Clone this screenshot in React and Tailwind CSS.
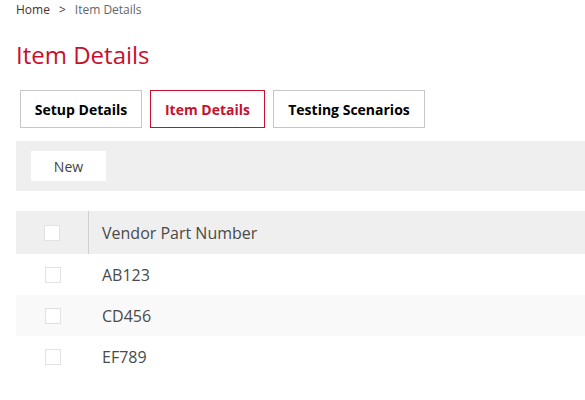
import React from "react";

const rows = ["AB123", "CD456", "EF789"];

const Box = () => (
  <span className="block w-4 h-4 bg-white border border-[#e2e2e2]" />
);

const App = () => {
  return (
    <div className="min-h-[400px] bg-white pl-4 font-['Open_Sans',sans-serif]">
      {/* Breadcrumb */}
      <div className="pt-[1px] text-[12px] leading-[17px] flex gap-[9px]">
        <span className="text-[#4a2f2f]">Home</span>
        <span className="text-[#4a2f2f]">&gt;</span>
        <span className="text-[#666]">Item Details</span>
      </div>

      <h1 className="mt-[21px] text-[24px] leading-[32px] text-[#c8102e]">
        Item Details
      </h1>

      {/* Tabs */}
      <div className="mt-[19px] ml-1 flex gap-2">
        <button className="h-[38px] w-[122px] border border-[#c6c6c6] bg-white text-[14px] font-bold text-black">
          Setup Details
        </button>
        <button className="h-[38px] w-[115px] border border-[#c8102e] bg-white text-[14px] font-bold text-[#c8102e]">
          Item Details
        </button>
        <button className="h-[38px] w-[152px] border border-[#c6c6c6] bg-white text-[14px] font-bold text-black">
          Testing Scenarios
        </button>
      </div>

      {/* Toolbar */}
      <div className="mt-[13px] h-[50px] bg-[#efefef] pl-[15px] pt-[10px]">
        <button className="h-[30px] w-[75px] bg-white text-[14px] text-[#444]">
          New
        </button>
      </div>

      {/* Grid */}
      <div className="mt-5">
        <div className="flex h-[43px] items-center bg-[#efefef]">
          <div className="flex h-full w-[73px] items-center justify-center border-r border-[#cfcfcf]">
            <Box />
          </div>
          <div className="pl-[13px] text-[16px] text-[#4a4a4a]">
            Vendor Part Number
          </div>
        </div>
        {rows.map((r, i) => (
          <div
            key={r}
            className={`flex h-[41px] items-center ${i === 1 ? "bg-[#f9f9f9]" : "bg-white"}`}
          >
            <div className="flex w-[73px] items-center justify-center">
              <Box />
            </div>
            <div className="pl-[13px] text-[16px] text-[#4a4a4a]">{r}</div>
          </div>
        ))}
      </div>
    </div>
  );
};

export default App;
